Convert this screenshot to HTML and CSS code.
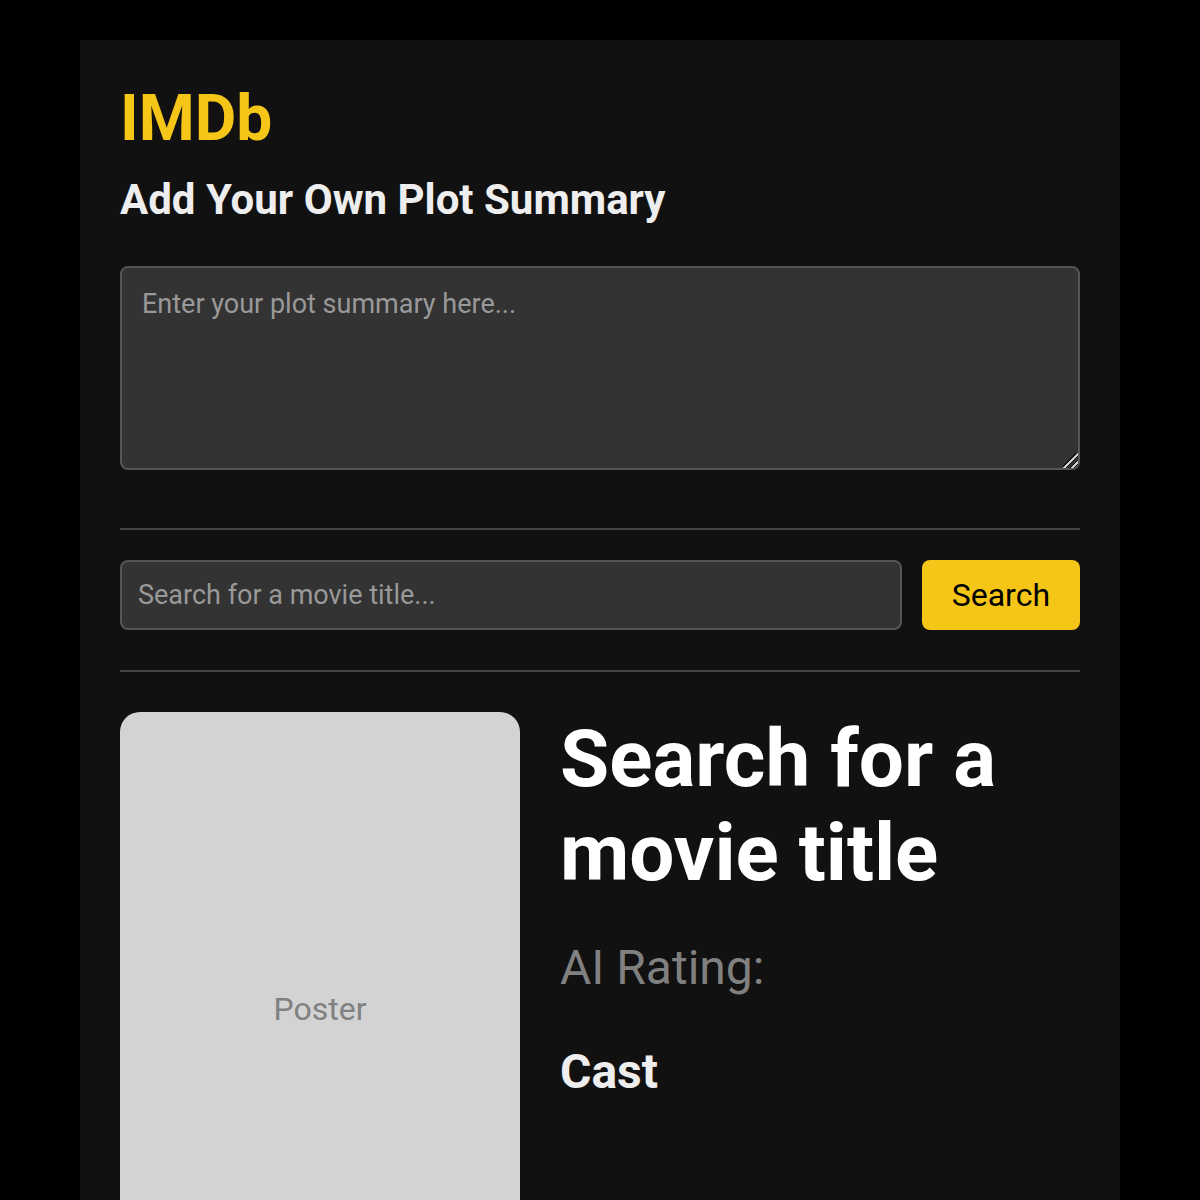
FILE: index.html
```html
<!DOCTYPE html>
<html lang="en">

<head>
    <meta charset="UTF-8">
    <meta name="viewport" content="width=device-width, initial-scale=1.0">
    <title>IMDb</title>
    <link rel="stylesheet" href="styles.css">
</head>

<body>
    <main class="container">
        <header class="header">
            <h1 class="logo">IMDb</h1>
            <h2><label for="plot-summary">Add Your Own Plot Summary</label></h2>
            <textarea id="plot-summary" class="plot-input" placeholder="Enter your plot summary here..."></textarea>
        </header>

        <form class="search-bar">
            <input type="text" id="movie-title" aria-label="Movie title" placeholder="Search for a movie title...">
            <button type="submit">Search</button>
        </form>

        <section class="movie">
            <div class="poster">Poster</div>
            <div class="details">
                <h2 class="title">Search for a movie title</h2>
                <p class="rating">AI Rating:</p>
                <h3>Cast</h3>
                <ul class="cast-list"></ul>
            </div>
        </section>
    </main>

    <script>
        document.querySelector('.search-bar').addEventListener('submit', function (e) {
            e.preventDefault();
            const title = document.getElementById('movie-title').value.trim();

            if (title) {
                document.querySelector('.title').textContent = title;
            }
        });
    </script>
</body>

</html>
```
FILE: styles.css
```css
* {
    margin: 0;
    padding: 0;
    box-sizing: border-box;
}

body {
    font-family: Roboto, sans-serif;
    background-color: #000;
    color: #eee;
    padding: 40px 80px;
}

.container {
    background-color: #111;
    padding: 40px;
}

.logo {
    color: #f5c518;
    font-size: 64px;
    line-height: 78px;
    margin-bottom: 20px;
}

.header h2 {
    font-size: 42px;
    line-height: 44px;
    margin-bottom: 44px;
}

.plot-input {
    display: block;
    width: 100%;
    height: 204px;
    padding: 20px;
    background-color: #333;
    color: #fff;
    border: 2px solid #555;
    border-radius: 8px;
    font-family: inherit;
    font-size: 27px;
    line-height: 32px;
    resize: vertical;
}

/* larger resize grip */
.plot-input::-webkit-scrollbar {
    width: 16px;
}

.plot-input::-webkit-resizer {
    background: linear-gradient(135deg, transparent 43%, #111 43%, #111 48%, #ccc 48%, #ccc 57%, #111 57%, #111 61%, transparent 61%, transparent 71%, #111 71%, #111 75%, #ccc 75%, #ccc 85%, #111 85%, #111 88%, transparent 88%) 0 0 / 15px 15px no-repeat;
}

::placeholder {
    color: #999;
}

.search-bar {
    display: flex;
    gap: 20px;
    margin-top: 58px;
    padding: 30px 0 40px;
    border-top: 2px solid #444;
    border-bottom: 2px solid #444;
}

.search-bar input {
    flex: 1;
    min-width: 0;
    height: 70px;
    padding: 0 16px;
    background-color: #333;
    color: #fff;
    border: 2px solid #555;
    border-radius: 8px;
    font-family: inherit;
    font-size: 27px;
}

.search-bar button {
    padding: 0 30px;
    background-color: #f5c518;
    color: #000;
    border: none;
    border-radius: 8px;
    font-family: inherit;
    font-size: 32px;
    cursor: pointer;
}

.movie {
    display: flex;
    align-items: flex-start;
    gap: 40px;
    padding-top: 40px;
}

.poster {
    display: flex;
    align-items: center;
    justify-content: center;
    flex: 0 0 400px;
    height: 594px;
    background-color: #d3d3d3;
    color: #808080;
    border-radius: 20px;
    font-size: 32px;
}

.details {
    flex: 1;
    min-width: 0;
}

.title {
    color: #fff;
    font-size: 80px;
    line-height: 94px;
}

.rating {
    margin-top: 40px;
    color: #808080;
    font-size: 48px;
    line-height: 56px;
}

.details h3 {
    margin-top: 48px;
    font-size: 48px;
    line-height: 56px;
}

.cast-list {
    list-style: none;
}
```
